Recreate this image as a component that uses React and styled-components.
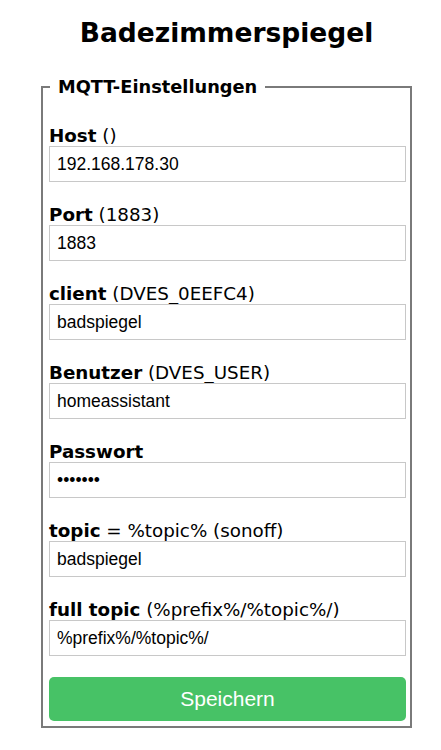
import styled, { createGlobalStyle } from "styled-components";

const GlobalStyle = createGlobalStyle`
  html, body {
    margin: 0;
    padding: 0;
    background: #fff;
  }
  body {
    font-family: "DejaVu Sans", Verdana, sans-serif;
    color: #000;
  }
`;

const Page = styled.div`
  width: 371px;
  padding: 18px 0 20px 41px;
`;

const Title = styled.h1`
  margin: 0;
  font-size: 26.5px;
  line-height: 30px;
  font-weight: bold;
  text-align: center;
`;

const Box = styled.fieldset`
  margin: 29px 0 0;
  padding: 0 4px 5px 6px;
  border: 2px solid #7a7a7a;
  min-width: 0;
`;

const Legend = styled.legend`
  margin-left: 1px;
  padding: 0 8px;
  font-size: 17.8px;
  line-height: 20px;
  font-weight: bold;
`;

const Field = styled.div`
  display: flex;
  flex-direction: column;
  padding-top: ${({ $first }) => ($first ? "29px" : "23px")};
`;

const Label = styled.label`
  font-size: 18.3px;
  line-height: 20px;
  white-space: nowrap;

  b {
    font-weight: bold;
  }
`;

const Input = styled.input`
  box-sizing: border-box;
  width: 100%;
  height: 36px;
  margin: 0;
  padding: 0 7px;
  border: 1px solid #c8c8c8;
  border-radius: 0;
  font-family: "Liberation Sans", Arial, sans-serif;
  font-size: 17.5px;
  color: #000;
  background: #fff;
  outline: none;
`;

const SaveButton = styled.button`
  box-sizing: border-box;
  width: 100%;
  height: 44px;
  margin-top: 21px;
  border: 0;
  border-radius: 5px;
  background: #47c266;
  color: #fff;
  font-family: "Liberation Sans", Arial, sans-serif;
  font-size: 21px;
  cursor: pointer;
`;

const fields = [
  { name: "Host", hint: " ()", value: "192.168.178.30" },
  { name: "Port", hint: " (1883)", value: "1883" },
  { name: "client", hint: " (DVES_0EEFC4)", value: "badspiegel" },
  { name: "Benutzer", hint: " (DVES_USER)", value: "homeassistant" },
  { name: "Passwort", hint: "", value: "1234567", type: "password" },
  { name: "topic", hint: " = %topic% (sonoff)", value: "badspiegel" },
  { name: "full topic", hint: " (%prefix%/%topic%/)", value: "%prefix%/%topic%/" },
];

export default function App() {
  return (
    <>
      <GlobalStyle />
      <Page>
        <Title>Badezimmerspiegel</Title>
        <Box>
          <Legend>MQTT-Einstellungen</Legend>
          {fields.map((f, i) => (
            <Field key={f.name} $first={i === 0}>
              <Label>
                <b>{f.name}</b>
                {f.hint}
              </Label>
              <Input type={f.type || "text"} defaultValue={f.value} />
            </Field>
          ))}
          <SaveButton>Speichern</SaveButton>
        </Box>
      </Page>
    </>
  );
}
